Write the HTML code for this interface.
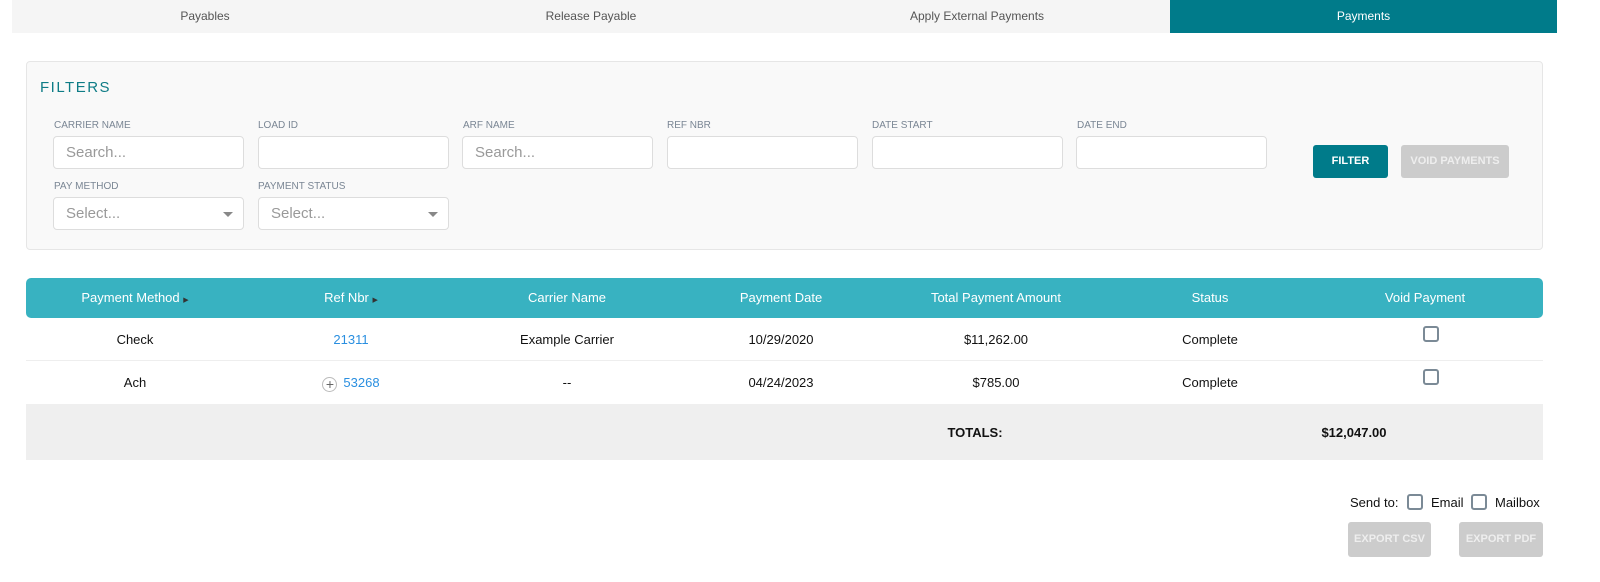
<!DOCTYPE html>
<html><head><style>
*{box-sizing:border-box;margin:0;padding:0}
body{width:1600px;height:582px;background:#fff;font-family:"Liberation Sans",sans-serif;position:relative;overflow:hidden}
.a{position:absolute}
.tab{position:absolute;top:0;height:33px;background:#f5f5f5;color:#555;font-size:12px;text-align:center;line-height:33px}
.lbl{position:absolute;font-size:10px;color:#7a8694}
.inp{position:absolute;width:191px;height:33px;background:#fff;border:1px solid #ddd;border-radius:4px;font-size:15px;color:#999;line-height:31px;padding-left:12px}
.car{position:absolute;right:10px;top:14px;border-left:5px solid transparent;border-right:5px solid transparent;border-top:5px solid #888}
.c{position:absolute;text-align:center;width:216px;font-size:13px;color:#111}
.btn{position:absolute;border-radius:3px;font-size:11px;font-weight:bold;color:#fff;text-align:center}
.cb{position:absolute;width:16px;height:16px;border:2px solid #7b8a96;border-radius:3px}
</style></head><body>
<div class="tab" style="left:12px;width:386px">Payables</div>
<div class="tab" style="left:398px;width:386px">Release Payable</div>
<div class="tab" style="left:784px;width:386px">Apply External Payments</div>
<div class="tab" style="left:1170px;width:387px;background:#007b8a;color:#fff">Payments</div>

<div class="a" style="left:26px;top:61px;width:1517px;height:189px;background:#f9f9f9;border:1px solid #e6e6e6;border-radius:4px"></div>
<div class="a" style="left:40px;top:79px;font-size:15px;letter-spacing:1.5px;color:#0e7c86">FILTERS</div>

<div class="lbl" style="left:54px;top:120px">CARRIER NAME</div>
<div class="lbl" style="left:258px;top:120px">LOAD ID</div>
<div class="lbl" style="left:463px;top:120px">ARF NAME</div>
<div class="lbl" style="left:667px;top:120px">REF NBR</div>
<div class="lbl" style="left:872px;top:120px">DATE START</div>
<div class="lbl" style="left:1077px;top:120px">DATE END</div>
<div class="inp" style="left:53px;top:136px">Search...</div>
<div class="inp" style="left:258px;top:136px"></div>
<div class="inp" style="left:462px;top:136px">Search...</div>
<div class="inp" style="left:667px;top:136px"></div>
<div class="inp" style="left:872px;top:136px"></div>
<div class="inp" style="left:1076px;top:136px"></div>
<div class="lbl" style="left:54px;top:181px">PAY METHOD</div>
<div class="lbl" style="left:258px;top:181px">PAYMENT STATUS</div>
<div class="inp" style="left:53px;top:197px">Select...<span class="car"></span></div>
<div class="inp" style="left:258px;top:197px">Select...<span class="car"></span></div>
<div class="btn" style="left:1313px;top:145px;width:75px;height:33px;line-height:33px;background:#007b8a">FILTER</div>
<div class="btn" style="left:1401px;top:145px;width:108px;height:33px;line-height:33px;background:#ccc;color:#eee">VOID PAYMENTS</div>

<div class="a" style="left:26px;top:278px;width:1517px;height:40px;background:#38b2c1;border-radius:5px"></div>
<div class="c" style="left:27px;top:290px;color:#fff">Payment Method <span style="font-size:7px;color:#333">▶</span></div>
<div class="c" style="left:243px;top:290px;color:#fff">Ref Nbr <span style="font-size:7px;color:#333">▶</span></div>
<div class="c" style="left:459px;top:290px;color:#fff">Carrier Name</div>
<div class="c" style="left:673px;top:290px;color:#fff">Payment Date</div>
<div class="c" style="left:888px;top:290px;color:#fff">Total Payment Amount</div>
<div class="c" style="left:1102px;top:290px;color:#fff">Status</div>
<div class="c" style="left:1317px;top:290px;color:#fff">Void Payment</div>

<div class="c" style="left:27px;top:332px">Check</div>
<div class="c" style="left:243px;top:332px;color:#2a8fe0">21311</div>
<div class="c" style="left:459px;top:332px">Example Carrier</div>
<div class="c" style="left:673px;top:332px">10/29/2020</div>
<div class="c" style="left:888px;top:332px">$11,262.00</div>
<div class="c" style="left:1102px;top:332px">Complete</div>
<div class="cb" style="left:1423px;top:326px"></div>
<div class="a" style="left:26px;top:360px;width:1517px;height:1px;background:#eee"></div>

<div class="c" style="left:27px;top:375px">Ach</div>
<div class="c" style="left:243px;top:375px;color:#2a8fe0"><span style="display:inline-block;width:15px;height:15px;border:1px solid #bbb;border-radius:50%;color:#666;font-size:14px;line-height:12px;vertical-align:-2px;margin-right:6px">+</span>53268</div>
<div class="c" style="left:459px;top:375px">--</div>
<div class="c" style="left:673px;top:375px">04/24/2023</div>
<div class="c" style="left:888px;top:375px">$785.00</div>
<div class="c" style="left:1102px;top:375px">Complete</div>
<div class="cb" style="left:1423px;top:369px"></div>

<div class="a" style="left:26px;top:404px;width:1517px;height:56px;background:#efefef"></div>
<div class="c" style="left:867px;top:425px;font-weight:bold">TOTALS:</div>
<div class="c" style="left:1246px;top:425px;font-weight:bold">$12,047.00</div>

<div class="a" style="left:1350px;top:495px;font-size:13px;color:#111">Send to:</div>
<div class="cb" style="left:1407px;top:494px"></div>
<div class="a" style="left:1431px;top:495px;font-size:13px;color:#111">Email</div>
<div class="cb" style="left:1471px;top:494px"></div>
<div class="a" style="left:1495px;top:495px;font-size:13px;color:#111">Mailbox</div>
<div class="btn" style="left:1348px;top:522px;width:83px;height:35px;line-height:35px;background:#ccc;color:#eee">EXPORT CSV</div>
<div class="btn" style="left:1459px;top:522px;width:84px;height:35px;line-height:35px;background:#ccc;color:#eee">EXPORT PDF</div>
</body></html>
